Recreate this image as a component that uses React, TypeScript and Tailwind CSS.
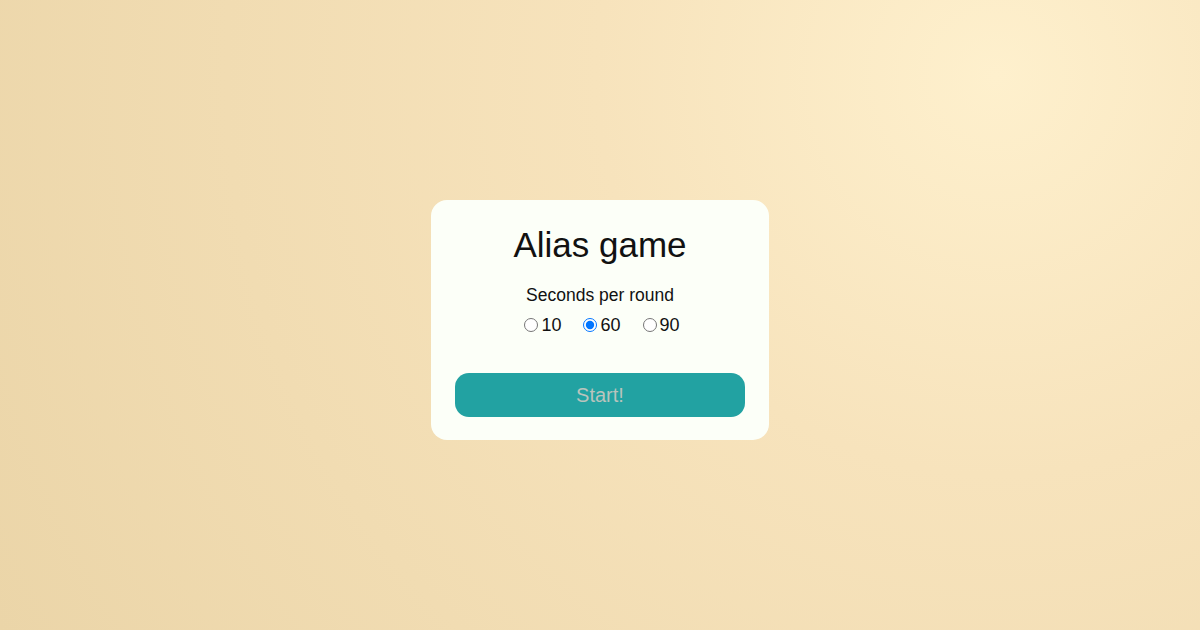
import React, { useState } from "react";

export default function App() {
  const [secs, setSecs] = useState("60");
  const opts = ["10", "60", "90"];
  return (
    <div
      className="w-[1200px] h-[630px] pt-[10px] flex items-center justify-center bg-[radial-gradient(circle_at_83%_12%,#fef0cd_0%,#f7e3bc_35%,#ebd5a8_100%)]"
      style={{ fontFamily: '"Liberation Sans", Arial, sans-serif' }}
    >
      <div className="w-[338px] h-[240px] rounded-[16px] bg-[#fcfff8] px-6 pt-6 pb-[23px] flex flex-col items-center">
        <h1 className="text-[35px] leading-[42px] text-[#111]">Alias game</h1>
        <div className="mt-[17px] text-[17.5px] leading-[24px] text-[#111]">Seconds per round</div>
        <div className="mt-[6px] flex items-center gap-[22px] h-[24px] pl-[4px]">
          {opts.map((o) => (
            <label key={o} className="flex items-center gap-[3px] text-[18px] leading-[24px] text-[#111]">
              <input
                type="radio"
                name="secs"
                value={o}
                checked={secs === o}
                onChange={() => setSecs(o)}
                className="w-[14px] h-[14px]"
              />
              <span>{o}</span>
            </label>
          ))}
        </div>
        <button
          disabled
          className="mt-[36px] w-[290px] h-[44px] rounded-[14px] bg-[#22a2a2] text-[20px] text-[#b9c4bd]"
        >
          Start!
        </button>
      </div>
    </div>
  );
}
